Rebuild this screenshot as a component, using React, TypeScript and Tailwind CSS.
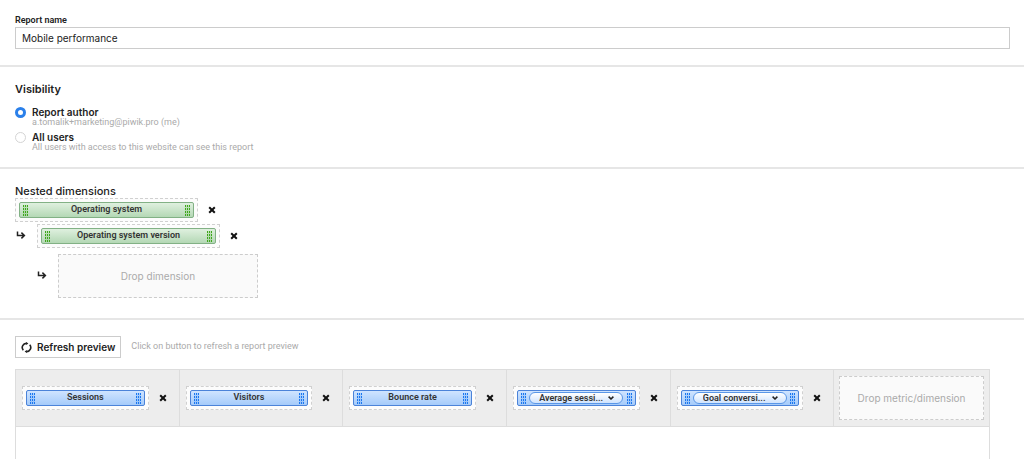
import { useState } from "react";

const metrics = [
  { name: "Sessions" },
  { name: "Visitors" },
  { name: "Bounce rate" },
  { name: "Average sessi...", select: true },
  { name: "Goal conversi...", select: true },
];

const visibilityOptions = [
  { value: "author", label: "Report author", hint: "a.tomalik+marketing@piwik.pro (me)" },
  { value: "all", label: "All users", hint: "All users with access to this website can see this report" },
];

function Grip({ className }: { className: string }) {
  return (
    <svg className={`w-[5px] h-[11px] shrink-0 ${className}`} viewBox="0 0 5 11" fill="currentColor" aria-hidden="true">
      <rect width="5" height="11" opacity="0.15" />
      {[0, 3, 6, 9].map(y => [0, 2, 4].map(x => (
        <rect key={`${x}-${y}`} x={x} y={y} width="1" height="2" />
      )))}
    </svg>
  );
}

function RemoveButton({ name }: { name: string }) {
  return (
    <button type="button" aria-label={`Remove ${name}`} className="shrink-0 text-[#111]">
      <svg className="w-2 h-2" viewBox="0 0 8 8" stroke="currentColor" strokeWidth="2" aria-hidden="true">
        <path d="M1.2 1.2 6.8 6.8M6.8 1.2 1.2 6.8" />
      </svg>
    </button>
  );
}

function NestArrow() {
  return (
    <svg className="w-3 h-[10px] shrink-0 text-[#222]" viewBox="0 0 12 10" fill="none" stroke="currentColor" strokeWidth="1.5" aria-hidden="true">
      <path d="M2.5 0.5V4.5H9.2M6.4 1.6 9.4 4.5 6.4 7.4" />
    </svg>
  );
}

function Dimension({ name }: { name: string }) {
  return (
    <>
      <div className="w-[183px] border border-dashed border-[#d0d0d0] bg-[#fcfcfc] p-[3px]">
        <div className="flex h-4 items-center justify-between rounded-xs border border-[#82b185] bg-linear-to-b from-[#dff0df] to-[#b4d8b5] px-[3px]">
          <Grip className="text-[#3fa61c]" />
          <span className="font-['Roboto','Liberation_Sans',sans-serif] text-[9px] font-semibold text-[#333]">{name}</span>
          <Grip className="text-[#3fa61c]" />
        </div>
      </div>
      <RemoveButton name={name} />
    </>
  );
}

function Metric({ name, select }: { name: string; select?: boolean }) {
  return (
    <div className="flex items-center gap-[10px] pl-[6px] pr-3">
      <div className="min-w-0 flex-1 border border-dashed border-[#d0d0d0] bg-[#fcfcfc] p-[3px]">
        <div className="flex h-4 items-center justify-between rounded-xs border border-[#4b83d9] bg-linear-to-b from-[#cfe4ff] to-[#a5cbfa] px-[3px]">
          <Grip className="text-[#1b78f0]" />
          {select ? (
            <div className="relative flex">
              <select aria-label="Metric" className="h-3 w-[94px] appearance-none rounded-full border border-[#5a97e8] bg-linear-to-b from-white to-[#cfe3fd] pl-[9px] font-['Roboto','Liberation_Sans',sans-serif] text-[9px] leading-[10px] font-semibold text-[#333]">
                <option>{name}</option>
              </select>
              <svg className="pointer-events-none absolute right-[9px] top-1 h-1 w-[6px]" viewBox="0 0 6 4" fill="none" stroke="#222" strokeWidth="1.5" aria-hidden="true">
                <path d="M0.6 0.6 3 3 5.4 0.6" />
              </svg>
            </div>
          ) : (
            <span className="font-['Roboto','Liberation_Sans',sans-serif] text-[9px] font-semibold text-[#333]">{name}</span>
          )}
          <Grip className="text-[#1b78f0]" />
        </div>
      </div>
      <RemoveButton name={name} />
    </div>
  );
}

export default function App() {
  const [reportName, setReportName] = useState("Mobile performance");
  const [visibility, setVisibility] = useState("author");

  return (
    <main className="bg-white font-['Inter','Liberation_Sans',sans-serif] text-[#222]">
      <section className="border-b-2 border-[#e6e6e6] pt-[14px] pr-[14px] pb-4 pl-[15px]">
        <label htmlFor="report-name" className="block font-['Roboto','Liberation_Sans',sans-serif] text-[9px] leading-3 font-semibold">Report name</label>
        <input
          id="report-name"
          className="mt-px block h-[22px] w-full border border-[#ccc] px-[6px] text-[10px]"
          value={reportName}
          onChange={e => setReportName(e.target.value)}
        />
      </section>

      <section className="border-b-2 border-[#e6e6e6] px-[15px] pt-[15px] pb-[15px]">
        <h2 className="text-[11px] leading-[14px] font-semibold">Visibility</h2>
        <div className="mt-[11px] flex flex-col gap-[5px]">
          {visibilityOptions.map(option => (
            <div key={option.value} className="flex items-start gap-[6px]">
              <input
                type="radio"
                id={option.value}
                name="visibility"
                className="size-[11px] shrink-0 appearance-none rounded-full border border-[#d4d4d4] bg-white checked:border-[3px] checked:border-[#2b80ea]"
                checked={visibility === option.value}
                onChange={() => setVisibility(option.value)}
              />
              <label htmlFor={option.value}>
                <span className="block text-[10px] leading-[11px] font-semibold">{option.label}</span>
                <span className="block font-['Roboto','Liberation_Sans',sans-serif] text-[9px] leading-[9px] text-[#aaa]">{option.hint}</span>
              </label>
            </div>
          ))}
        </div>
      </section>

      <section className="border-b-2 border-[#e6e6e6] px-[15px] pt-[15px] pb-5">
        <h2 className="text-[11px] leading-[14px] font-medium">Nested dimensions</h2>
        <div className="flex items-center gap-[10px]">
          <Dimension name="Operating system" />
        </div>
        <div className="mt-[2px] flex items-center gap-[10px]">
          <NestArrow />
          <Dimension name="Operating system version" />
        </div>
        <div className="mt-[6px] flex items-center gap-[10px] pl-[21px]">
          <NestArrow />
          <div className="flex h-11 w-[200px] items-center justify-center border border-dashed border-[#ccc] bg-[#fafafa] text-[10px] text-[#aaa]">
            Drop dimension
          </div>
        </div>
      </section>

      <section className="pt-4 pr-[34px] pl-[15px]">
        <div className="flex items-center gap-[10px]">
          <button type="button" className="flex h-[22px] items-center gap-[5px] border border-[#ccc] px-[5px] text-[10px] font-semibold">
            <svg className="size-[11px]" viewBox="0 0 11 11" fill="none" stroke="currentColor" strokeWidth="1.6" aria-hidden="true">
              <path d="M2.3 8.2A4.1 4.1 0 0 1 5.8 1.4M8.7 2.8A4.1 4.1 0 0 1 5.2 9.6" />
              <path d="M5.2 0 7.4 1.5 5.2 3ZM5.8 8 3.6 9.5 5.8 11Z" fill="currentColor" stroke="none" />
            </svg>
            Refresh preview
          </button>
          <p className="font-['Roboto','Liberation_Sans',sans-serif] text-[9px] text-[#aaa]">Click on button to refresh a report preview</p>
        </div>

        <table className="mt-[11px] w-full table-fixed border-collapse border-x border-[#ddd]">
          <thead>
            <tr className="h-[57px] border-y border-[#ddd] bg-[#ededed]">
              {metrics.map(metric => (
                <th key={metric.name} className="w-[16.8%] border-r border-[#ddd] p-0">
                  <Metric {...metric} />
                </th>
              ))}
              <th className="px-[5px] py-[6px] font-normal">
                <div className="flex h-11 items-center justify-center border border-dashed border-[#ccc] bg-[#fafafa] text-[10px] text-[#aaa]">
                  Drop metric/dimension
                </div>
              </th>
            </tr>
          </thead>
          <tbody>
            <tr>
              <td colSpan={6} className="h-8" />
            </tr>
          </tbody>
        </table>
      </section>
    </main>
  );
}
